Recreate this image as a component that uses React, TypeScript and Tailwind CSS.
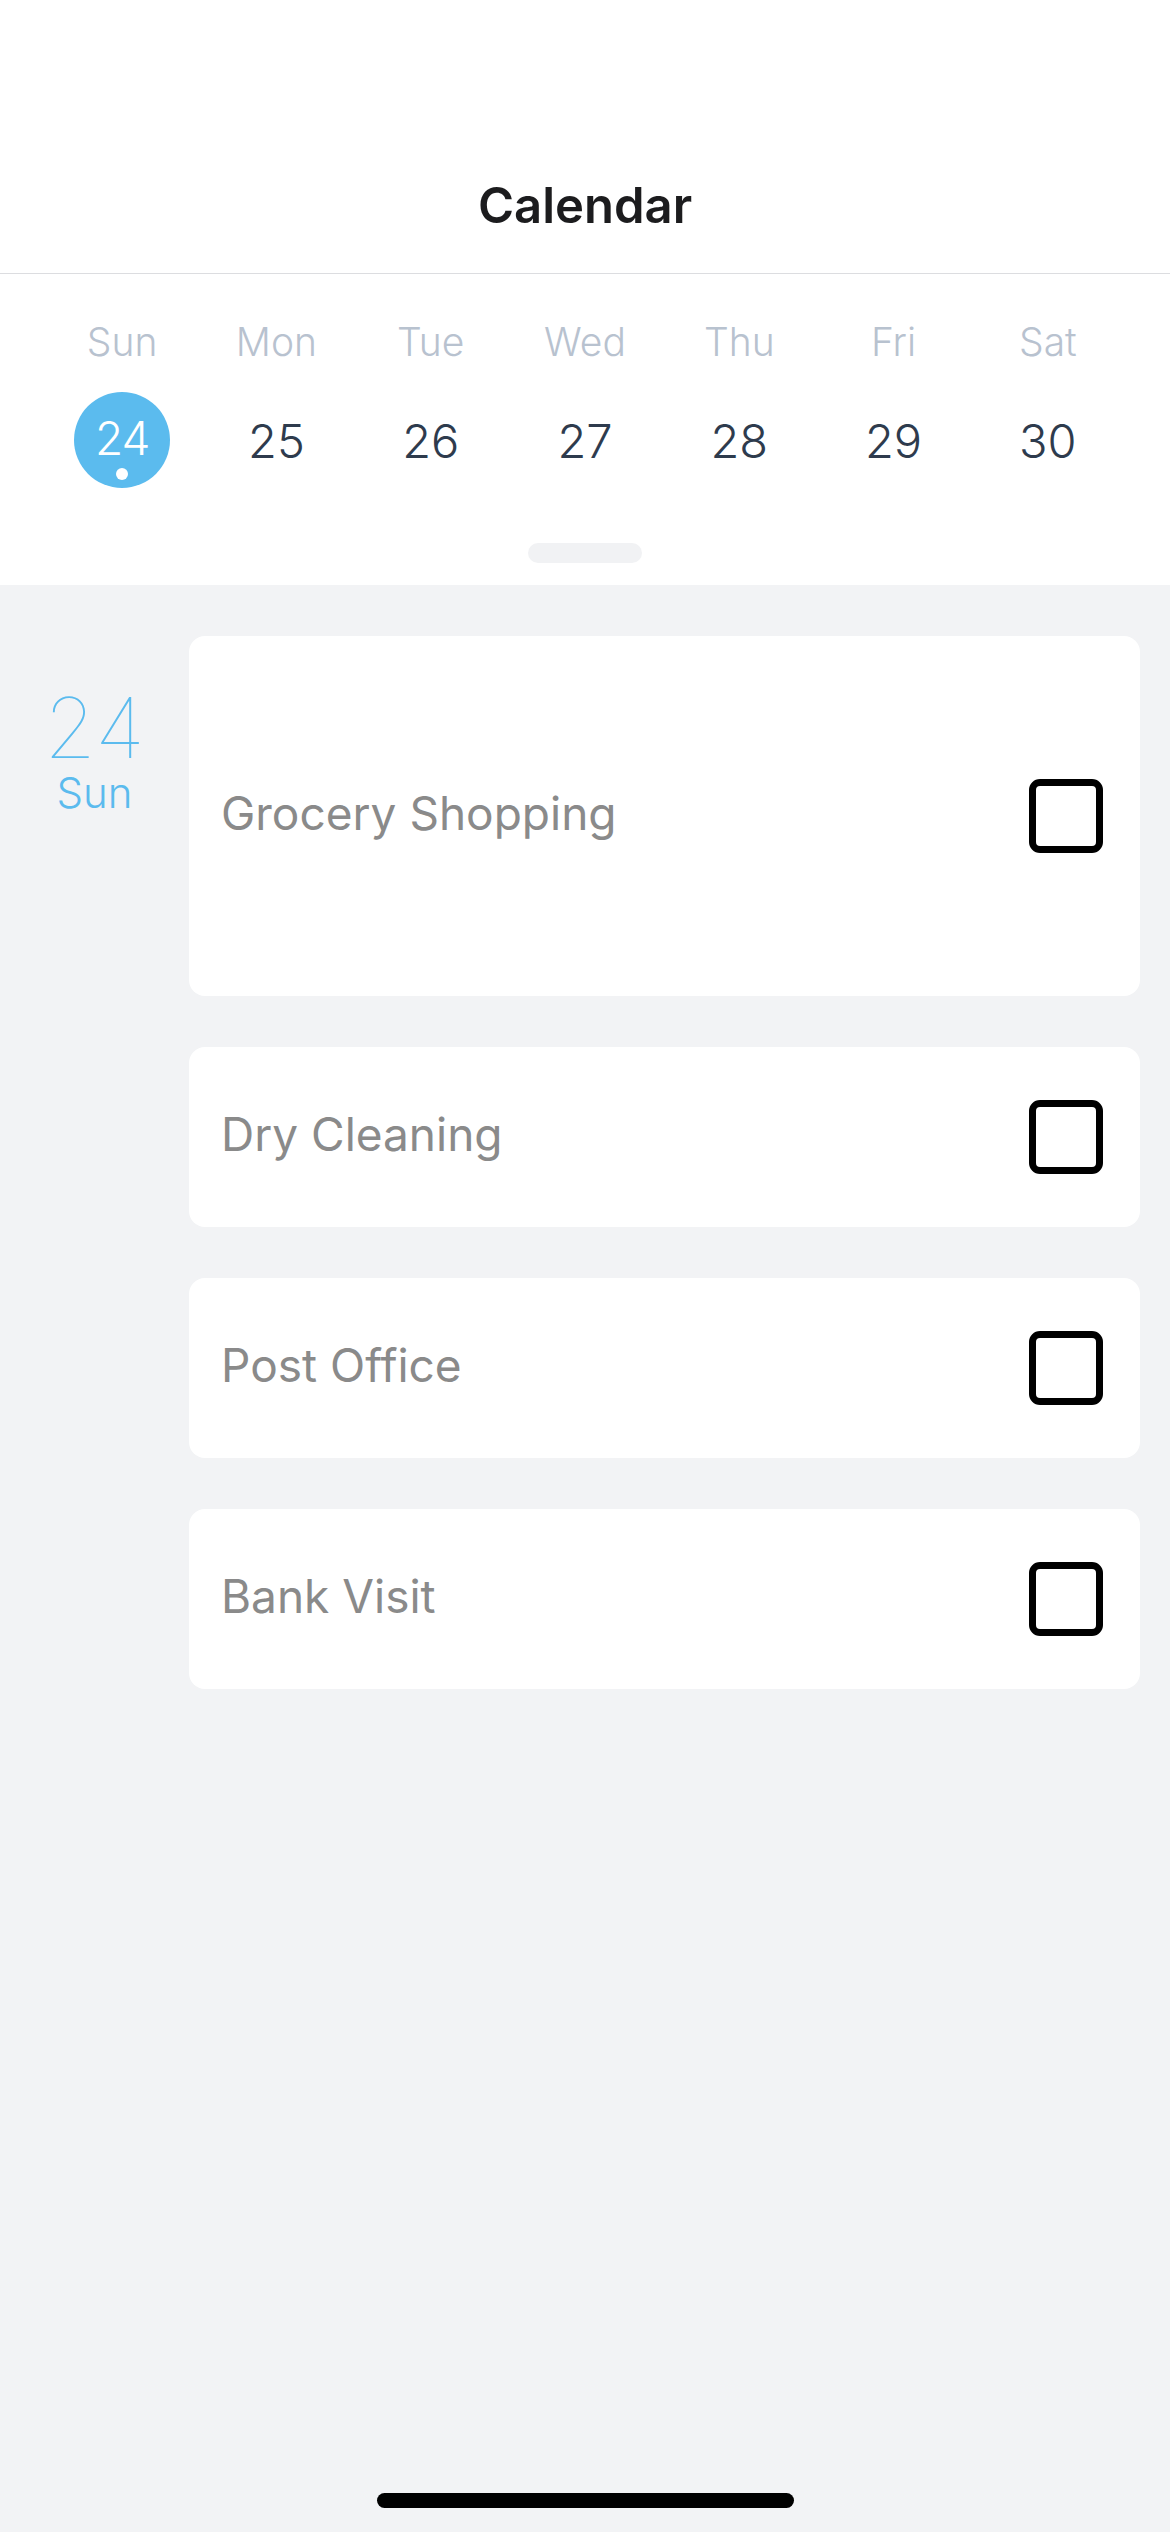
import { useState } from 'react'

type Task = {
  id: string
  title: string
  tall?: boolean
}

const DAYS = [
  { name: 'Sun', date: 24 },
  { name: 'Mon', date: 25 },
  { name: 'Tue', date: 26 },
  { name: 'Wed', date: 27 },
  { name: 'Thu', date: 28 },
  { name: 'Fri', date: 29 },
  { name: 'Sat', date: 30 },
]

const TASKS: Task[] = [
  { id: 'grocery', title: 'Grocery Shopping', tall: true },
  { id: 'dry', title: 'Dry Cleaning' },
  { id: 'post', title: 'Post Office' },
  { id: 'bank', title: 'Bank Visit' },
]

const FONT = 'font-["Inter","Liberation_Sans",sans-serif]'

function WeekStrip({ selected }: { selected: number }) {
  return (
    <div className="grid grid-cols-7 px-[45px] pt-[44px]">
      {DAYS.map((d) => (
        <div key={d.name} className="flex flex-col items-center">
          <span className="h-[48px] text-[39px] leading-[48px] font-light text-[#b8c2cf]">
            {d.name}
          </span>
          <div className="mt-[26px] flex h-[96px] w-[96px] items-center justify-center">
            {d.date === selected ? (
              <div className="relative flex h-[96px] w-[96px] items-center justify-center rounded-full bg-[#5bbbee] pb-[4px]">
                <span className="text-[46px] leading-none font-light tracking-[-1px] text-white">
                  {d.date}
                </span>
                <span className="absolute bottom-[8px] left-1/2 h-[12px] w-[12px] -translate-x-1/2 rounded-full bg-white" />
              </div>
            ) : (
              <span className="text-[47px] leading-none font-light text-[#2e3b4d]">
                {d.date}
              </span>
            )}
          </div>
        </div>
      ))}
    </div>
  )
}

function TaskCard({
  task,
  done,
  onToggle,
}: {
  task: Task
  done: boolean
  onToggle: () => void
}) {
  return (
    <div
      className={`flex items-center justify-between rounded-[16px] bg-white pr-[37px] pl-[32px] ${
        task.tall ? 'h-[360px]' : 'h-[180px]'
      }`}
    >
      <span className="pb-[6px] text-[46px] leading-none text-[#8a8a8a]">{task.title}</span>
      <button
        type="button"
        onClick={onToggle}
        aria-label={`Mark ${task.title} done`}
        className="flex h-[74px] w-[74px] items-center justify-center rounded-[11px] border-[7px] border-black bg-white"
      >
        {done && (
          <svg viewBox="0 0 24 24" className="h-[44px] w-[44px]" fill="none" stroke="black" strokeWidth={3}>
            <path d="M5 12.5l4.5 4.5L19 7.5" strokeLinecap="round" strokeLinejoin="round" />
          </svg>
        )}
      </button>
    </div>
  )
}

export default function App() {
  const [done, setDone] = useState<Record<string, boolean>>({})

  return (
    <div className={`${FONT} flex min-h-[2532px] flex-col bg-[#f2f3f5]`}>
      <header className="bg-white">
        <div className="flex h-[274px] items-start justify-center border-b border-[#dcdde0] pt-[176px]">
          <h1 className="text-[49px] leading-[60px] font-semibold text-[#1c1c1e]">Calendar</h1>
        </div>
        <WeekStrip selected={24} />
        <div className="flex justify-center pt-[55px] pb-[22px]">
          <div className="h-[20px] w-[114px] rounded-full bg-[#f1f2f4]" />
        </div>
      </header>

      <main className="flex flex-1 pt-[51px] pr-[30px]">
        <div className="flex w-[189px] flex-col items-center pt-[50px] text-[#5bbbee]">
          <span className="text-[84px] leading-none font-thin">24</span>
          <span className="mt-[2px] text-[42px] leading-none font-light">Sun</span>
        </div>
        <div className="flex flex-1 flex-col gap-[51px]">
          {TASKS.map((t) => (
            <TaskCard
              key={t.id}
              task={t}
              done={!!done[t.id]}
              onToggle={() => setDone((s) => ({ ...s, [t.id]: !s[t.id] }))}
            />
          ))}
        </div>
      </main>

      <div className="flex justify-center pb-[24px]">
        <div className="h-[15px] w-[417px] rounded-full bg-black" />
      </div>
    </div>
  )
}
